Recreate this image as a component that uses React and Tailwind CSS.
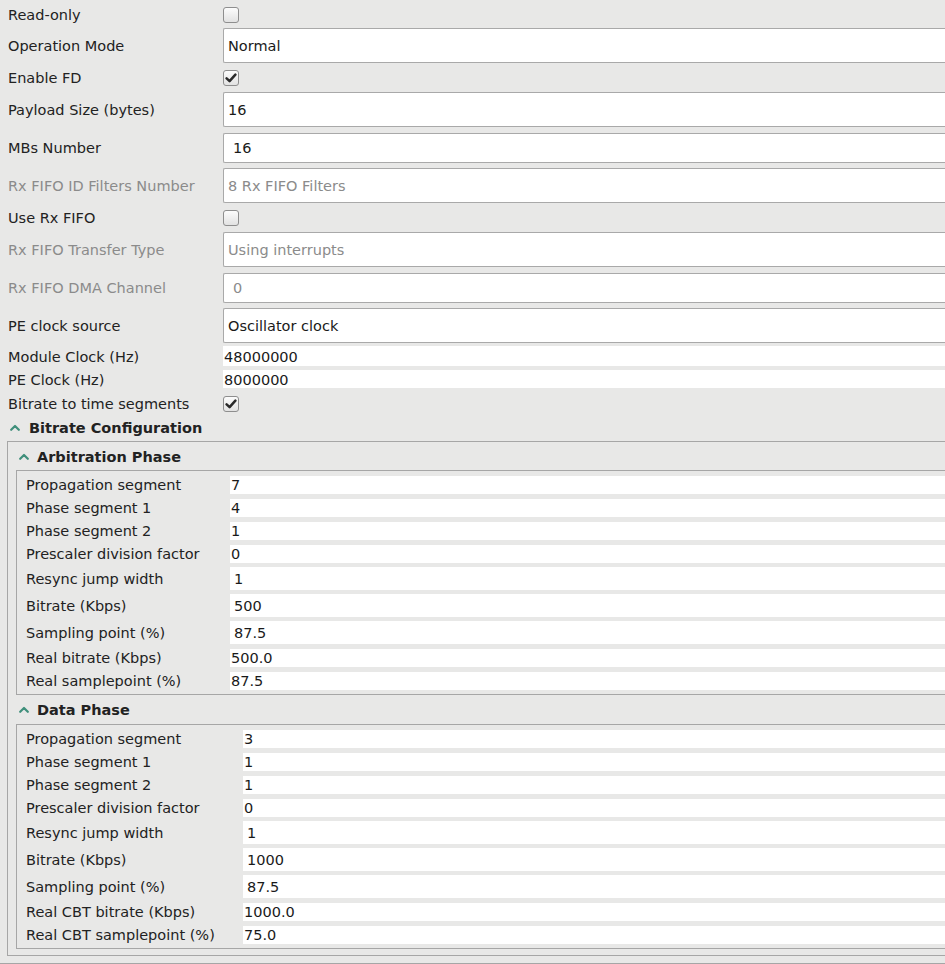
import React from 'react';

const Check = ({ checked }) => (
  <div className="w-4 h-4 mt-[1px] rounded-[3px] border border-[#8e8e8e] bg-gradient-to-b from-[#fcfcfc] to-[#e2e2e2] flex items-center justify-center">
    {checked && (
      <svg width="12" height="10" viewBox="0 0 12 10">
        <path d="M1.6 5.3 L4.6 8.1 L10.4 1.6" stroke="#2a2a2a" strokeWidth="2.5" fill="none" strokeLinecap="round" strokeLinejoin="round" />
      </svg>
    )}
  </div>
);

const Chevron = () => (
  <svg width="10" height="7" viewBox="0 0 10 7" className="shrink-0">
    <path d="M1.2 5.8 L5 2 L8.8 5.8" stroke="#3f8f7b" strokeWidth="2.2" fill="none" strokeLinecap="round" strokeLinejoin="round" />
  </svg>
);

// top level property row
const Row = ({ h, label, disabled, children }) => (
  <div className={`flex items-center ${h}`}>
    <div className={`w-[223px] shrink-0 pl-[8px] pt-[2px] ${disabled ? 'text-[#8b8b8b]' : 'text-[#222]'}`}>{label}</div>
    <div className="flex-1 flex items-center h-full">{children}</div>
  </div>
);

const Box = ({ children, disabled, spin }) => (
  <div
    className={`flex-1 h-full flex items-center bg-white border border-[#a9a9a9] border-r-0 rounded-l-[2px] ${spin ? 'pl-[9px]' : 'pl-[4px]'} ${disabled ? 'text-[#8b8b8b]' : 'text-[#1a1a1a]'}`}
  >
    <span className="pt-[2px]">{children}</span>
  </div>
);

const Bar = ({ h, children }) => (
  <div className={`flex-1 ${h} bg-white flex items-center pl-[1px] text-[#1a1a1a]`}>
    <span className="pt-[2px]">{children}</span>
  </div>
);

const SubRow = ({ label, value, spin, labelW }) => (
  <div className={`flex items-center ${spin ? 'h-[27px]' : 'h-[23px]'}`}>
    <div className={`${labelW} shrink-0 pl-[9px] pt-[2px] text-[#222]`}>{label}</div>
    <div className={`flex-1 bg-white flex items-center text-[#1a1a1a] ${spin ? 'h-[23px] pl-[4px]' : 'h-[18px] pl-[1px]'}`}>
      <span className="pt-[2px]">{value}</span>
    </div>
  </div>
);

const arbitration = [
  ['Propagation segment', '7'],
  ['Phase segment 1', '4'],
  ['Phase segment 2', '1'],
  ['Prescaler division factor', '0'],
  ['Resync jump width', '1', true],
  ['Bitrate (Kbps)', '500', true],
  ['Sampling point (%)', '87.5', true],
  ['Real bitrate (Kbps)', '500.0'],
  ['Real samplepoint (%)', '87.5'],
];

const dataPhase = [
  ['Propagation segment', '3'],
  ['Phase segment 1', '1'],
  ['Phase segment 2', '1'],
  ['Prescaler division factor', '0'],
  ['Resync jump width', '1', true],
  ['Bitrate (Kbps)', '1000', true],
  ['Sampling point (%)', '87.5', true],
  ['Real CBT bitrate (Kbps)', '1000.0'],
  ['Real CBT samplepoint (%)', '75.0'],
];

export default function App() {
  return (
    <div className="w-full h-[964px] overflow-hidden bg-[#e8e8e7] font-['DejaVu_Sans',Verdana,sans-serif] text-[14.5px] leading-none">
      <div className="w-[1000px]">
        <Row h="h-[28px]" label="Read-only"><Check /></Row>
        <Row h="h-[35px]" label="Operation Mode"><Box>Normal</Box></Row>
        <Row h="h-[29px]" label="Enable FD"><Check checked /></Row>
        <Row h="h-[35px]" label="Payload Size (bytes)"><Box>16</Box></Row>
        <Row h="h-[41px]" label="MBs Number">
          <div className="flex-1 h-[30px] flex"><Box spin>16</Box></div>
        </Row>
        <Row h="h-[35px]" label="Rx FIFO ID Filters Number" disabled><Box disabled>8 Rx FIFO Filters</Box></Row>
        <Row h="h-[29px]" label="Use Rx FIFO"><Check /></Row>
        <Row h="h-[35px]" label="Rx FIFO Transfer Type" disabled><Box disabled>Using interrupts</Box></Row>
        <Row h="h-[41px]" label="Rx FIFO DMA Channel" disabled>
          <div className="flex-1 h-[30px] flex"><Box spin disabled>0</Box></div>
        </Row>
        <Row h="h-[35px]" label="PE clock source"><Box>Oscillator clock</Box></Row>
        <Row h="h-[26px]" label="Module Clock (Hz)"><Bar h="h-[20px]">48000000</Bar></Row>
        <Row h="h-[20px]" label="PE Clock (Hz)"><Bar h="h-[18px]">8000000</Bar></Row>
        <Row h="h-[29px]" label="Bitrate to time segments"><Check checked /></Row>

        {/* Bitrate Configuration group */}
        <div className="h-[18px] mb-[5px] flex items-center gap-[9px] pl-[10px]">
          <Chevron />
          <span className="font-bold text-[#222] pt-[2px]">Bitrate Configuration</span>
        </div>
        <div className="ml-[7px] border border-r-0 border-[#a6a6a6] pl-[8px] pb-[6px]">
          <div className="h-[28px] flex items-center gap-[8px] pl-[3px]">
            <Chevron />
            <span className="font-bold text-[#222] pt-[2px]">Arbitration Phase</span>
          </div>
          <div className="border border-r-0 border-[#a6a6a6] py-[2px]">
            {arbitration.map(([l, v, s]) => (
              <SubRow key={l} label={l} value={v} spin={s} labelW="w-[213px]" />
            ))}
          </div>
          <div className="h-[29px] flex items-center gap-[8px] pl-[3px]">
            <Chevron />
            <span className="font-bold text-[#222] pt-[2px]">Data Phase</span>
          </div>
          <div className="border border-r-0 border-[#a6a6a6] py-[2px]">
            {dataPhase.map(([l, v, s]) => (
              <SubRow key={l} label={l} value={v} spin={s} labelW="w-[226px]" />
            ))}
          </div>
        </div>
        <div className="h-[7px]" />
        <div className="border-t border-[#a6a6a6]" />
      </div>
    </div>
  );
}
